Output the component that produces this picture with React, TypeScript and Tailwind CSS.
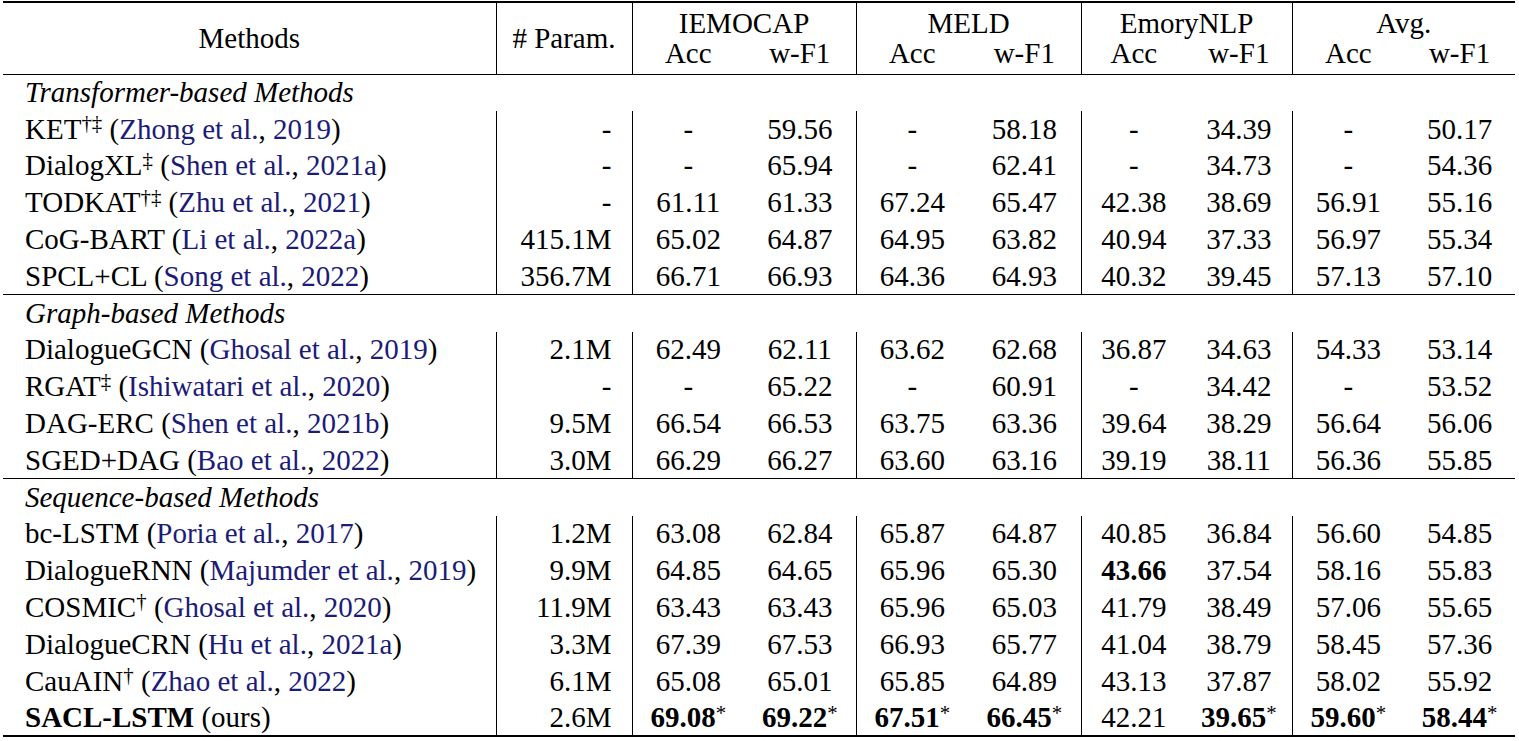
import React from 'react';

type Row = {
  name: string;
  sup?: string;
  cite?: [string, string];
  ours?: boolean;
  param: string;
  vals: string[];
};

type Section = { title: string; rows: Row[] };

// "!" prefix = bold, "*" suffix = superscript star
const sections: Section[] = [
  {
    title: 'Transformer-based Methods',
    rows: [
      { name: 'KET', sup: '†‡', cite: ['Zhong et al.', '2019'], param: '-', vals: ['-', '59.56', '-', '58.18', '-', '34.39', '-', '50.17'] },
      { name: 'DialogXL', sup: '‡', cite: ['Shen et al.', '2021a'], param: '-', vals: ['-', '65.94', '-', '62.41', '-', '34.73', '-', '54.36'] },
      { name: 'TODKAT', sup: '†‡', cite: ['Zhu et al.', '2021'], param: '-', vals: ['61.11', '61.33', '67.24', '65.47', '42.38', '38.69', '56.91', '55.16'] },
      { name: 'CoG-BART', cite: ['Li et al.', '2022a'], param: '415.1M', vals: ['65.02', '64.87', '64.95', '63.82', '40.94', '37.33', '56.97', '55.34'] },
      { name: 'SPCL+CL', cite: ['Song et al.', '2022'], param: '356.7M', vals: ['66.71', '66.93', '64.36', '64.93', '40.32', '39.45', '57.13', '57.10'] },
    ],
  },
  {
    title: 'Graph-based Methods',
    rows: [
      { name: 'DialogueGCN', cite: ['Ghosal et al.', '2019'], param: '2.1M', vals: ['62.49', '62.11', '63.62', '62.68', '36.87', '34.63', '54.33', '53.14'] },
      { name: 'RGAT', sup: '‡', cite: ['Ishiwatari et al.', '2020'], param: '-', vals: ['-', '65.22', '-', '60.91', '-', '34.42', '-', '53.52'] },
      { name: 'DAG-ERC', cite: ['Shen et al.', '2021b'], param: '9.5M', vals: ['66.54', '66.53', '63.75', '63.36', '39.64', '38.29', '56.64', '56.06'] },
      { name: 'SGED+DAG', cite: ['Bao et al.', '2022'], param: '3.0M', vals: ['66.29', '66.27', '63.60', '63.16', '39.19', '38.11', '56.36', '55.85'] },
    ],
  },
  {
    title: 'Sequence-based Methods',
    rows: [
      { name: 'bc-LSTM', cite: ['Poria et al.', '2017'], param: '1.2M', vals: ['63.08', '62.84', '65.87', '64.87', '40.85', '36.84', '56.60', '54.85'] },
      { name: 'DialogueRNN', cite: ['Majumder et al.', '2019'], param: '9.9M', vals: ['64.85', '64.65', '65.96', '65.30', '!43.66', '37.54', '58.16', '55.83'] },
      { name: 'COSMIC', sup: '†', cite: ['Ghosal et al.', '2020'], param: '11.9M', vals: ['63.43', '63.43', '65.96', '65.03', '41.79', '38.49', '57.06', '55.65'] },
      { name: 'DialogueCRN', cite: ['Hu et al.', '2021a'], param: '3.3M', vals: ['67.39', '67.53', '66.93', '65.77', '41.04', '38.79', '58.45', '57.36'] },
      { name: 'CauAIN', sup: '†', cite: ['Zhao et al.', '2022'], param: '6.1M', vals: ['65.08', '65.01', '65.85', '64.89', '43.13', '37.87', '58.02', '55.92'] },
      { name: 'SACL-LSTM', ours: true, param: '2.6M', vals: ['!69.08*', '!69.22*', '!67.51*', '!66.45*', '42.21', '!39.65*', '!59.60*', '!58.44*'] },
    ],
  },
];

const datasets = ['IEMOCAP', 'MELD', 'EmoryNLP', 'Avg.'];

function Value({ v }: { v: string }) {
  const bold = v.startsWith('!');
  const star = v.endsWith('*');
  const text = v.replace('!', '').replace('*', '');
  return (
    <>
      <span className={bold ? 'font-bold' : ''}>{text}</span>
      {star && <sup className="text-[0.72em] -top-[0.32em]">*</sup>}
    </>
  );
}

function MethodCell({ row }: { row: Row }) {
  return (
    <>
      <span className={row.ours ? 'font-bold' : ''}>{row.name}</span>
      {row.sup && <sup className="text-[0.72em] -top-[0.42em]">{row.sup}</sup>}{' '}
      {row.ours ? (
        <span>(ours)</span>
      ) : (
        row.cite && (
          <span>
            (<span className="text-[#1c1c78]">{row.cite[0]}</span>, <span className="text-[#1c1c78]">{row.cite[1]}</span>)
          </span>
        )
      )}
    </>
  );
}

// widths of the 10 columns
const colW = ['w-[493px]', 'w-[136px]', 'w-[112px]', 'w-[112px]', 'w-[112px]', 'w-[113px]', 'w-[105px]', 'w-[106px]', 'w-[112px]', 'w-[111px]'];

export default function App() {
  return (
    <div className="min-h-screen bg-white text-black pt-[1px] pl-[3px]" style={{ fontFamily: '"Liberation Serif", "Times New Roman", serif' }}>
      <table className="w-[1512px] border-collapse table-fixed text-[29px] leading-none">
        <colgroup>
          {colW.map((w, i) => (
            <col key={i} className={w} />
          ))}
        </colgroup>
        <thead>
          <tr className="h-[36px] border-t-2 border-black">
            <th rowSpan={2} className="font-normal text-center align-middle">Methods</th>
            <th rowSpan={2} className="font-normal text-center align-middle border-l border-black"># Param.</th>
            {datasets.map((d) => (
              <th key={d} colSpan={2} className="font-normal text-center align-bottom border-l border-black">
                {d}
              </th>
            ))}
          </tr>
          <tr className="h-[36px] border-b border-black">
            {datasets.map((d) => (
              <React.Fragment key={d}>
                <th className="font-normal text-center align-middle pb-[4px] border-l border-black">Acc</th>
                <th className="font-normal text-center align-middle pb-[4px]">w-F1</th>
              </React.Fragment>
            ))}
          </tr>
        </thead>
        {sections.map((s, si) => (
          <tbody key={s.title} className={si === sections.length - 1 ? 'border-b-2 border-black' : 'border-b border-black'}>
            <tr className="h-[36.8px]">
              <td colSpan={10} className="italic pl-[22px] align-middle">
                {s.title}
              </td>
            </tr>
            {s.rows.map((r) => (
              <tr key={r.name} className="h-[36.8px]">
                <td className="pl-[22px] align-middle whitespace-nowrap">
                  <MethodCell row={r} />
                </td>
                <td className="text-right pr-[20px] align-middle border-l border-black">{r.param}</td>
                {r.vals.map((v, i) => (
                  <td key={i} className={`text-center align-middle whitespace-nowrap ${i % 2 === 0 ? 'border-l border-black' : ''}`}>
                    <Value v={v} />
                  </td>
                ))}
              </tr>
            ))}
          </tbody>
        ))}
      </table>
    </div>
  );
}
